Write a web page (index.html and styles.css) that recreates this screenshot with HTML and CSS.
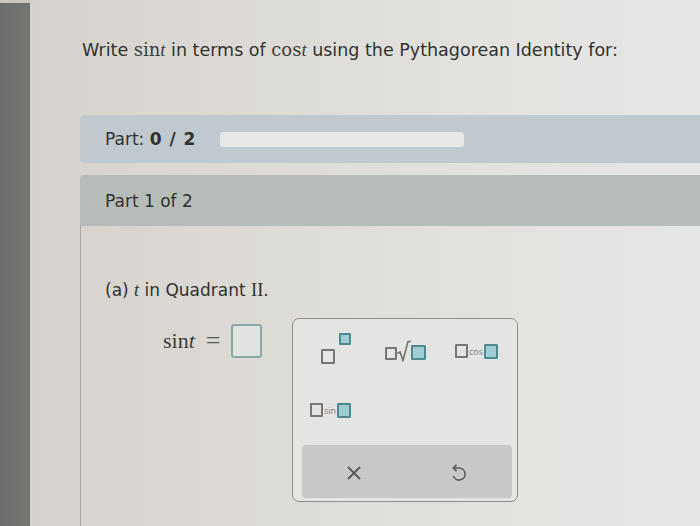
FILE: index.html
```html
<!DOCTYPE html>
<html>
<head>
<meta charset="utf-8">
<link rel="stylesheet" href="styles.css">
</head>
<body>
<div class="page">
  <aside class="sidebar"></aside>
  <main class="main">
    <p class="question">Write <span class="math">sin<i>t</i></span> in terms of <span class="math">cos<i>t</i></span> using the Pythagorean Identity for:</p>
    <div class="progress">
      <span class="progress-label">Part: <b>0 / 2</b></span>
      <div class="track"></div>
    </div>
    <div class="part-header">Part 1 of 2</div>
    <section class="part-body">
      <p class="prompt">(a) <i class="t">t</i> in Quadrant <span class="roman">II</span>.</p>
      <div class="answer-row">
        <div class="answer">
          <span class="math-serif">sin<i>t</i></span>
          <span class="eq">=</span>
          <span class="input"></span>
        </div>
        <div class="palette">
          <div class="tool-row first">
            <div class="tool sup">
              <span class="box base"></span><span class="box fill small"></span>
            </div>
            <div class="tool sqrt">
              <span class="box base"></span>
              <svg class="radical" width="14" height="22" viewBox="0 0 14 22"><path d="M0.5 13.5 L3 12 L6 20.5 L11 1.5 L14 1.5" fill="none" stroke="#6f7371" stroke-width="1.6"/></svg>
              <span class="box fill"></span>
            </div>
            <div class="tool fn cos">
              <span class="box base"></span><span class="fn-name">cos</span><span class="box fill"></span>
            </div>
          </div>
          <div class="tool-row second">
            <div class="tool fn sin">
              <span class="box base"></span><span class="fn-name">sin</span><span class="box fill"></span>
            </div>
          </div>
          <div class="actions">
            <button class="action" aria-label="clear">
              <svg width="16" height="16" viewBox="0 0 16 16"><path d="M2 2 L14 14 M14 2 L2 14" stroke="#555a58" stroke-width="1.8" fill="none"/></svg>
            </button>
            <button class="action" aria-label="undo">
              <svg width="16" height="20" viewBox="0 0 16 20"><path d="M2.5 5 L8 5 A6 6 0 1 1 2.4 13" fill="none" stroke="#555a58" stroke-width="1.6"/><path d="M5.5 1.8 L2.3 5 L5.5 8.2" fill="none" stroke="#555a58" stroke-width="1.6"/></svg>
            </button>
          </div>
        </div>
      </div>
    </section>
  </main>
</div>
</body>
</html>
```
FILE: styles.css
```css
* { box-sizing: border-box; }
html, body { margin: 0; padding: 0; }
body {
  width: 700px;
  height: 526px;
  overflow: hidden;
  font-family: "DejaVu Sans", "Open Sans", sans-serif;
  color: #2f3231;
}
.page {
  display: flex;
  height: 526px;
  background: linear-gradient(90deg, #d4d0ca 0%, #dcd9d4 30%, #e3e2df 70%, #e6e6e4 100%);
}
.sidebar {
  width: 30px;
  flex: none;
  background: linear-gradient(90deg, #6c6e6b, #737572);
  border-top: 3px solid #c9c7c2;
}
.main {
  flex: 1;
  padding-left: 50px;
  display: flex;
  flex-direction: column;
}
.question {
  margin: 38px 0 0 2px;
  font-size: 17.5px;
  line-height: 24px;
  height: 77px;
  white-space: nowrap;
}
.math {
  font-family: "DejaVu Serif", "Liberation Serif", serif;
  font-size: 18px;
  color: #3d403f;
}
.math i { font-family: "Liberation Serif", serif; font-style: italic; font-size: 18.5px; }
.progress {
  height: 48px;
  background: #c0c9cd;
  border-radius: 4px 0 0 4px;
  display: flex;
  align-items: center;
  padding-left: 25px;
  gap: 25px;
}
.progress-label { font-size: 17px; }
.progress-label b { font-weight: 700; word-spacing: 2px; }
.track {
  width: 244px;
  height: 15px;
  background: #e7e8e6;
  border-radius: 3px;
}
.part-header {
  margin-top: 12px;
  height: 51px;
  background: #b6bdb9;
  border-radius: 4px 0 0 0;
  font-size: 17px;
  padding-left: 25px;
  display: flex;
  align-items: center;
}
.part-body {
  flex: 1;
  border-left: 1px solid #a8a7a3;
  padding: 52px 0 0 24px;
}
.prompt {
  margin: 0;
  font-size: 17px;
  line-height: 24px;
}
.t { font-family: "Liberation Serif", serif; font-style: italic; font-size: 18px; }
.roman { font-family: "Liberation Serif", serif; font-size: 18.5px; }
.answer-row {
  display: flex;
  align-items: flex-start;
  margin-top: 16px;
}
.answer {
  display: flex;
  align-items: center;
  margin: 6px 0 0 58px;
}
.math-serif {
  font-family: "Liberation Serif", serif;
  font-size: 22px;
  color: #3a3d3c;
}
.math-serif i { font-style: italic; font-size: 22px; }
.eq {
  font-family: "Liberation Serif", serif;
  font-size: 26px;
  line-height: 26px;
  color: #555;
  margin-left: 11px;
}
.input {
  width: 31px;
  height: 34px;
  margin-left: 11px;
  border: 2px solid #88a8a8;
  border-radius: 3px;
  background: #e2e3e0;
}
.palette {
  margin-left: 30px;
  width: 226px;
  height: 184px;
  border: 1.5px solid #8d8f8d;
  border-radius: 7px;
  background: #e4e5e2;
  display: flex;
  flex-direction: column;
  padding: 0 5.5px 3.5px 8.5px;
}
.tool-row {
  display: flex;
  align-items: flex-end;
}
.tool-row.first { height: 32px; margin-top: 12.5px; }
.tool-row.second { height: 16px; margin-top: 38px; }
.tool {
  display: flex;
  align-items: flex-end;
}
.box {
  display: inline-block;
  flex: none;
  width: 13px;
  height: 13px;
  border: 2px solid #747776;
  border-radius: 1px;
}
.box.fill {
  background: #9fcdd4;
  border-color: #4f8a93;
}
.sup { margin-left: 19px; height: 31px; }
.sup .base { width: 14px; height: 15px; }
.sup .small { width: 12px; height: 12px; align-self: flex-start; margin-left: 4px; }
.sqrt { margin-left: 34px; margin-bottom: 4px; }
.sqrt .base { width: 12px; height: 13px; }
.sqrt .radical { margin-bottom: -2px; }
.sqrt .fill { width: 15px; height: 15px; }
.fn { align-items: center; }
.cos { margin-left: 29px; margin-bottom: 5px; }
.sin { margin-left: 8px; }
.fn .box { width: 13px; height: 14px; }
.fn .box.fill { width: 14px; height: 15px; }
.fn-name {
  font-family: "Open Sans", sans-serif;
  font-size: 9px;
  color: #7a7d7c;
  margin: 0 1px 0 1px;
  line-height: 13px;
}
.actions {
  margin-top: auto;
  height: 53px;
  background: #c8c9c7;
  border-radius: 4px;
  display: flex;
  align-items: center;
}
.action {
  flex: 1;
  height: 100%;
  border: 0;
  background: transparent;
  display: flex;
  align-items: center;
  justify-content: center;
  padding: 4px 0 0 0;
}
```
